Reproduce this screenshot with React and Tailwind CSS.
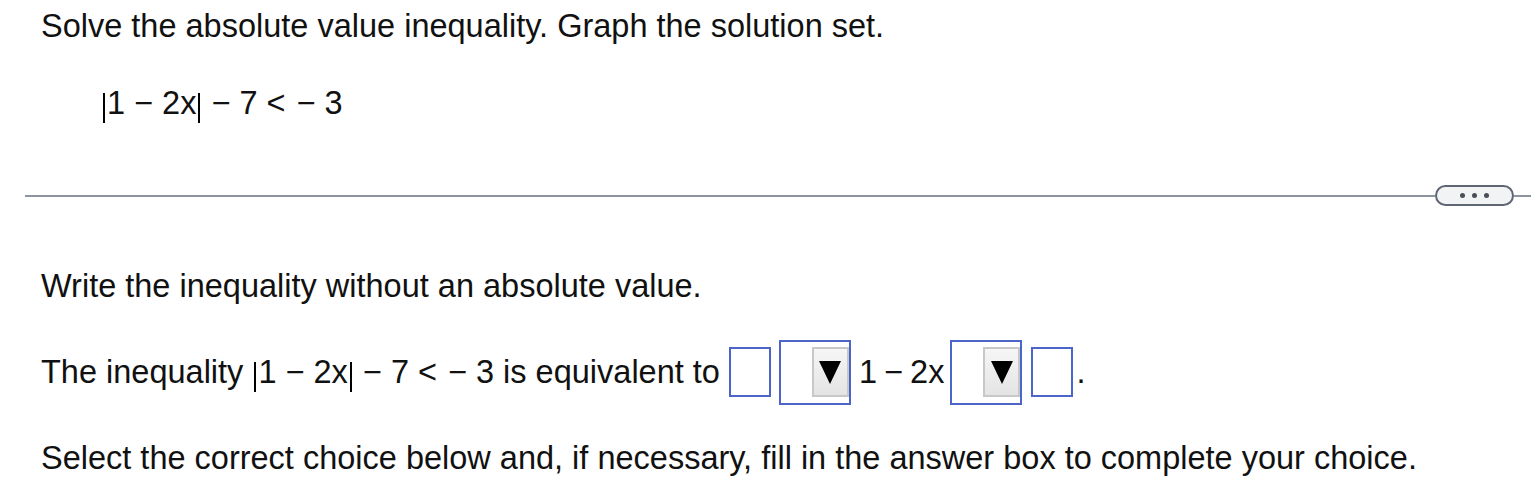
import React from 'react';

const FONT = { fontFamily: '"Liberation Sans", Arial, sans-serif' };

function Bar() {
  return <span className="inline-block w-[2px] h-[30px] bg-black align-[-9px] mx-[2px]" />;
}

function AbsExpr() {
  return (
    <span className="whitespace-pre">
      <Bar />1 − 2x<Bar /> − 7 &lt;<span className="ml-[2px]"> − 3</span>
    </span>
  );
}

function Box() {
  return <div className="mt-[7px] w-[42px] h-[50px] border-2 border-[#4b66c8] bg-white" />;
}

function Dropdown() {
  return (
    <div className="w-[72px] h-[65px] border-2 border-[#4b66c8] bg-white flex justify-end pt-[5px]">
      <div className="w-[37px] h-[50px] border-2 border-[#c8c8c8] bg-gradient-to-b from-[#f6f6f6] to-[#e4e4e4] flex items-center justify-center">
        <svg width="22" height="23" viewBox="0 0 22 23">
          <polygon points="0,0 22,0 11,23" fill="#000" />
        </svg>
      </div>
    </div>
  );
}

export default function App() {
  return (
    <div className="bg-white text-[#111] text-[32.5px] leading-[36px] pt-[8px]" style={FONT}>
      <p className="pl-[41px]">Solve the absolute value inequality. Graph the solution set.</p>
      <p className="pl-[101px] mt-[41px] h-[36px]"><AbsExpr /></p>

      <div className="flex items-center ml-[25px] mt-[64px]">
        <div className="flex-1 h-[2px] bg-[#8e93a0]" />
        <button className="w-[79px] h-[21px] rounded-full border-2 border-[#5f6673] bg-[#f2f3f5] flex items-center justify-center gap-[7px]">
          <span className="w-[5px] h-[5px] rounded-full bg-[#4a4f58]" />
          <span className="w-[5px] h-[5px] rounded-full bg-[#4a4f58]" />
          <span className="w-[5px] h-[5px] rounded-full bg-[#4a4f58]" />
        </button>
        <div className="w-[17px] h-[2px] bg-[#8e93a0]" />
      </div>

      <p className="pl-[41px] mt-[62px]">Write the inequality without an absolute value.</p>

      <div className="flex items-start pl-[41px] mt-[36px]">
        <span className="mt-[14px] whitespace-pre">The inequality <AbsExpr /> is equivalent to </span>
        <Box />
        <div className="w-[8px]" />
        <Dropdown />
        <span className="mt-[14px] ml-[8px] mr-[6px] whitespace-pre [word-spacing:-2px]">1 − 2x</span>
        <Dropdown />
        <div className="w-[9px]" />
        <Box />
        <span className="mt-[14px] ml-[3px]">.</span>
      </div>

      <p className="pl-[41px] mt-[35px]">Select the correct choice below and, if necessary, fill in the answer box to complete your choice.</p>
    </div>
  );
}
